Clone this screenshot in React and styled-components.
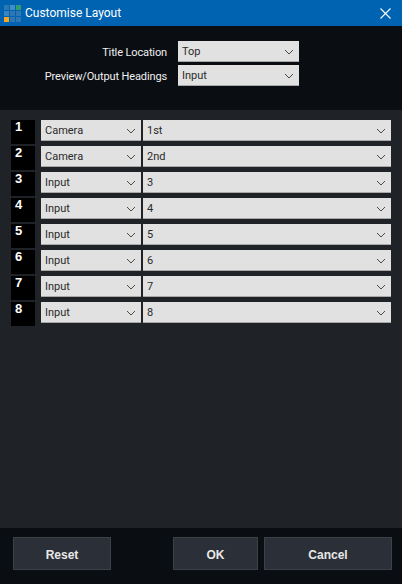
import React from 'react';
import styled, { createGlobalStyle } from 'styled-components';

const Global = createGlobalStyle`
  html, body { margin: 0; padding: 0; background: #0a0d12; }
  * { box-sizing: border-box; }
`;
const Win = styled.div`
  width: 402px; height: 584px; display: flex; flex-direction: column; overflow: hidden;
  font-family: Roboto, "Noto Sans", "Liberation Sans", sans-serif; font-size: 11px; color: #fff;
`;
const TitleBar = styled.header`
  height: 26px; flex: none; background: #0063b1; display: flex; align-items: center; padding: 0 11px 0 4px;
`;
const Title = styled.span`
  margin-left: 4px; font-size: 12px; color: #fff; flex: 1;
`;
const Head = styled.section`
  height: 84px; flex: none; background: #0a0d12; padding: 15px 0 0 0;
  display: grid; grid-template-columns: 167px 121px; column-gap: 11px; row-gap: 3px; grid-auto-rows: 21px; align-content: start;
`;
const Label = styled.label`
  text-align: right; line-height: 24px; color: #f0f0f0; white-space: nowrap; letter-spacing: -0.13px;
`;
const Body = styled.section`
  flex: 1; background: #1f2327; padding: 10px 11px 0 11px; display: grid;
  grid-template-columns: 24px 106px 250px; grid-auto-rows: 21px; row-gap: 5px; align-content: start;
`;
const Num = styled.div`
  background: #000; height: 24px; font-family: "Liberation Sans", sans-serif; font-weight: 700; font-size: 13px;
  line-height: 13px; padding: 0 0 0 4px;
`;
const SelectBox = styled.div`
  background: #e1e1e1; border-bottom: 1px solid #a8a8a8; color: #2a2a2a; display: flex; align-items: center;
  justify-content: space-between; padding: 1px 5px 0 4px; height: 21px; margin-left: ${p => p.$ml}px;
`;
const Foot = styled.footer`
  height: 56px; flex: none; background: #0a0d12; display: flex; padding: 9px 10px 0 13px;
`;
const Btn = styled.button`
  width: ${p => p.$w}px; height: 33px; margin-left: ${p => p.$ml}px; background: #2b2f37; border: 1px solid #3c4047; color: #e8e8e8;
  font-family: "Liberation Sans", sans-serif; font-weight: 700; font-size: 12px; padding: 2px 0 0;
`;
const Chevron = () => (
  <svg width="10" height="6" viewBox="0 0 10 6" fill="none" stroke="#4a4a4a" strokeWidth="1"><path d="M1 1l4 4 4-4" /></svg>
);
const Logo = () => (
  <svg width="17" height="17" viewBox="0 0 17 17">
    {[0,1,2].flatMap(r => [0,1,2].map(c => {
      const fill = r===2&&c===0 ? '#f5a623' : r===0&&c===2 ? '#2f9e6e' : r===0&&c===1 ? '#3d8fc4' : r===1&&c===0 ? '#3a84c0' : '#2f76b4';
      return <rect key={r+'-'+c} x={c*6} y={r*6} width="5" height="5" fill={fill} />;
    }))}
  </svg>
);
const Select = ({ children, ml = 0 }) => (
  <SelectBox $ml={ml}><span>{children}</span><Chevron /></SelectBox>
);
const rows = [['Camera','1st'],['Camera','2nd'],['Input','3'],['Input','4'],['Input','5'],['Input','6'],['Input','7'],['Input','8']];

export default function App() {
  return (
    <Win>
      <Global />
      <TitleBar>
        <Logo />
        <Title>Customise Layout</Title>
        <svg width="11" height="11" viewBox="0 0 11 11" stroke="#fff" strokeWidth="1.1"><path d="M.5.5l10 10M10.5.5l-10 10" /></svg>
      </TitleBar>
      <Head>
        <Label>Title Location</Label><Select>Top</Select>
        <Label>Preview/Output Headings</Label><Select>Input</Select>
      </Head>
      <Body>
        {rows.map(([a,b],i) => (
          <React.Fragment key={i}>
            <Num>{i+1}</Num>
            <Select ml={6}>{a}</Select>
            <Select ml={2}>{b}</Select>
          </React.Fragment>
        ))}
      </Body>
      <Foot>
        <Btn $w={98} $ml={0}>Reset</Btn>
        <Btn $w={85} $ml={62}>OK</Btn>
        <Btn $w={128} $ml={6}>Cancel</Btn>
      </Foot>
    </Win>
  );
}
